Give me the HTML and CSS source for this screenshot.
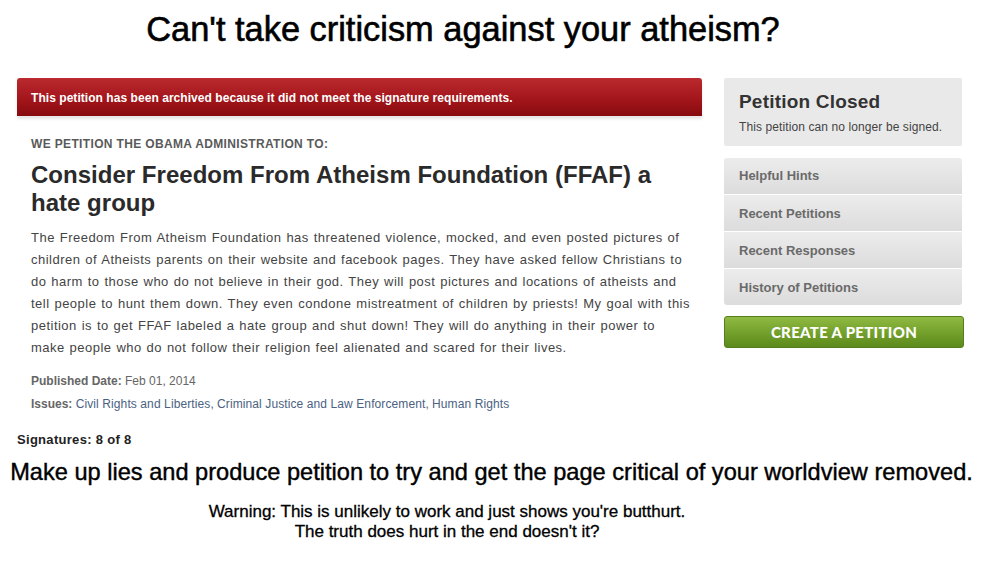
FILE: index.html
```html
<!DOCTYPE html>
<html>
<head>
<meta charset="utf-8">
<link rel="stylesheet" href="styles.css">
</head>
<body>
<h1 class="top-title">Can't take criticism against your atheism?</h1>
<div class="layout">
  <div class="main">
    <div class="banner">This petition has been archived because it did not meet the signature requirements.</div>
    <div class="petition">
      <div class="kicker">WE PETITION THE OBAMA ADMINISTRATION TO:</div>
      <h2 class="ptitle">Consider Freedom From Atheism Foundation (FFAF) a hate group</h2>
      <p class="pbody">The Freedom From Atheism Foundation has threatened violence, mocked, and even posted pictures of<br>children of Atheists parents on their website and facebook pages. They have asked fellow Christians to<br>do harm to those who do not believe in their god. They will post pictures and locations of atheists and<br>tell people to hunt them down. They even condone mistreatment of children by priests! My goal with this<br>petition is to get FFAF labeled a hate group and shut down! They will do anything in their power to<br>make people who do not follow their religion feel alienated and scared for their lives.</p>
      <div class="meta"><span class="label">Published Date:</span> Feb 01, 2014</div>
      <div class="meta"><span class="label">Issues:</span> <span class="link">Civil Rights and Liberties</span>, <span class="link">Criminal Justice and Law Enforcement</span>, <span class="link">Human Rights</span></div>
    </div>
    <div class="sigs">Signatures: 8 of 8</div>
  </div>
  <aside class="side">
    <div class="closed">
      <div class="closed-title">Petition Closed</div>
      <div class="closed-sub">This petition can no longer be signed.</div>
    </div>
    <ul class="nav">
      <li>Helpful Hints</li>
      <li>Recent Petitions</li>
      <li>Recent Responses</li>
      <li>History of Petitions</li>
    </ul>
    <div class="create">CREATE A PETITION</div>
  </aside>
</div>
<div class="caption">Make up lies and produce petition to try and get the page critical of your worldview removed.</div>
<div class="warning">Warning: This is unlikely to work and just shows you're butthurt.<br>The truth does hurt in the end doesn't it?</div>
</body>
</html>
```

FILE: styles.css
```css
* { box-sizing: border-box; }
html, body { margin: 0; padding: 0; background: #fff; }
body { font-family: "Liberation Sans", Arial, sans-serif; width: 987px; }

.top-title {
  margin: 0;
  padding-top: 10px;
  height: 78px;
  font-size: 34.4px;
  font-weight: normal;
  color: #000;
  text-align: center;
  padding-right: 61px;
  line-height: 38px;
  -webkit-text-stroke: 0.6px #000;
}

.layout {
  display: flex;
  padding-left: 17px;
  gap: 22px;
  align-items: flex-start;
}
.main { width: 685px; }

.banner {
  height: 38px;
  background: linear-gradient(#ba2a2f, #a3161b 55%, #870a0e);
  border-radius: 3px 3px 0 0;
  color: #fff;
  font-size: 12px;
  font-weight: bold;
  padding: 13px 14px 0;
  letter-spacing: 0.05px;
  box-shadow: 0 3px 3px rgba(0,0,0,0.1);
}

.petition { padding: 21px 14px 0; }
.kicker {
  font-size: 12px;
  font-weight: bold;
  color: #5a5a5a;
  line-height: 14px;
  letter-spacing: 0.35px;
}
.ptitle {
  margin: 10px 0 0;
  font-size: 24px;
  line-height: 28px;
  font-weight: bold;
  color: #2a2a2a;
  width: 660px;
  letter-spacing: 0.02px;
}
.pbody {
  margin: 10px 0 0;
  font-size: 13px;
  line-height: 22px;
  color: #444;
  white-space: nowrap;
  letter-spacing: 0.48px;
  word-spacing: 0.8px;
}
.meta {
  font-size: 12px;
  color: #666;
  line-height: 14px;
  margin-top: 9px;
}
.pbody + .meta { margin-top: 15px; }
.meta .label { font-weight: bold; color: #666; }
.meta .link { color: #4a6282; letter-spacing: 0.1px; }

.sigs {
  margin-top: 21px;
  font-size: 13px;
  font-weight: bold;
  color: #222;
  line-height: 16px;
  letter-spacing: 0.3px;
}

.side { width: 240px; }
.closed {
  width: 238px;
  height: 68px;
  background: #e9e9e9;
  border-radius: 2px;
  padding: 14px 15px 0;
}
.closed-title {
  font-size: 19px;
  font-weight: bold;
  color: #333;
  line-height: 20px;
  letter-spacing: 0.2px;
}
.closed-sub {
  margin-top: 8px;
  font-size: 12px;
  color: #444;
  line-height: 14px;
  letter-spacing: 0.1px;
}

.nav {
  list-style: none;
  margin: 12px 0 0;
  padding: 0;
  width: 238px;
  border-radius: 3px;
  overflow: hidden;
}
.nav li {
  height: 37px;
  background: linear-gradient(#ececec, #dcdcdc);
  border-top: 1px solid #fff;
  font-size: 13px;
  font-weight: bold;
  color: #6a6a6a;
  padding: 11px 15px 0;
}
.nav li:first-child { border-top: none; height: 36px; padding-top: 10px; }

.create {
  margin-top: 11px;
  height: 32px;
  border-radius: 3px;
  background: linear-gradient(#8fba44, #75a22c 50%, #5c8a1c);
  border: 1px solid #557f1a;
  color: #fff;
  font-family: Lato, "Liberation Sans", sans-serif;
  font-weight: 900;
  font-size: 15px;
  letter-spacing: 0.3px;
  text-align: center;
  line-height: 30px;
}

.caption {
  margin-top: 11px;
  font-size: 23.6px;
  text-align: center;
  color: #000;
  line-height: 26px;
  padding-right: 4px;
  -webkit-text-stroke: 0.4px #000;
}
.warning {
  margin-top: 17px;
  font-size: 17px;
  line-height: 20px;
  text-align: center;
  color: #000;
  padding-right: 93px;
  -webkit-text-stroke: 0.3px #000;
}
```
